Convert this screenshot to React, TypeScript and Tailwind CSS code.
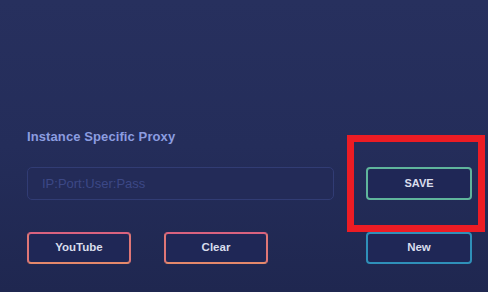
import React from "react";

export default function App() {
  const font = { fontFamily: '"Liberation Sans", Arial, sans-serif' };
  return (
    <div
      className="w-[488px] h-[292px] overflow-hidden bg-gradient-to-b from-[#27305e] via-[#242d5a] to-[#1f2750]"
      style={font}
    >
      <div className="pt-[129px] pl-[27px]">
        <div className="text-[13px] font-bold leading-[16px] text-[#8c9de0] tracking-[0.1px]">
          Instance Specific Proxy
        </div>
        <div className="mt-[22px] flex items-center gap-[32px]">
          <div className="w-[307px] h-[33px] rounded-[5px] border border-[#313c74] bg-[#232b58] flex items-center pl-[14px] text-[13px] text-[#3c4886]">
            IP:Port:User:Pass
          </div>
          <div className="relative">
            <button className="w-[106px] h-[33px] rounded-[4px] border-2 border-[#5fb59c] bg-[#1f2756] text-[11px] font-bold text-[#d9ddec]">
              SAVE
            </button>
            <div className="absolute left-[-19px] top-[-32px] w-[138px] h-[97px] border-[7px] border-[#ec1c24] pointer-events-none" />
          </div>
        </div>
        <div className="mt-[32px] flex items-center">
          <button className="w-[104px] h-[32px] rounded-[4px] border-2 border-t-[#d9627f] border-x-[#df7676] border-b-[#e5896b] bg-[#1f2756] text-[11.5px] font-bold text-[#d9ddec]">
            YouTube
          </button>
          <button className="ml-[33px] w-[104px] h-[32px] rounded-[4px] border-2 border-t-[#d9627f] border-x-[#df7676] border-b-[#e5896b] bg-[#1f2756] text-[11.5px] font-bold text-[#d9ddec]">
            Clear
          </button>
          <button className="ml-[98px] w-[106px] h-[32px] rounded-[4px] border-2 border-[#2f90b9] bg-[#1f2756] text-[11.5px] font-bold text-[#d9ddec]">
            New
          </button>
        </div>
      </div>
    </div>
  );
}
